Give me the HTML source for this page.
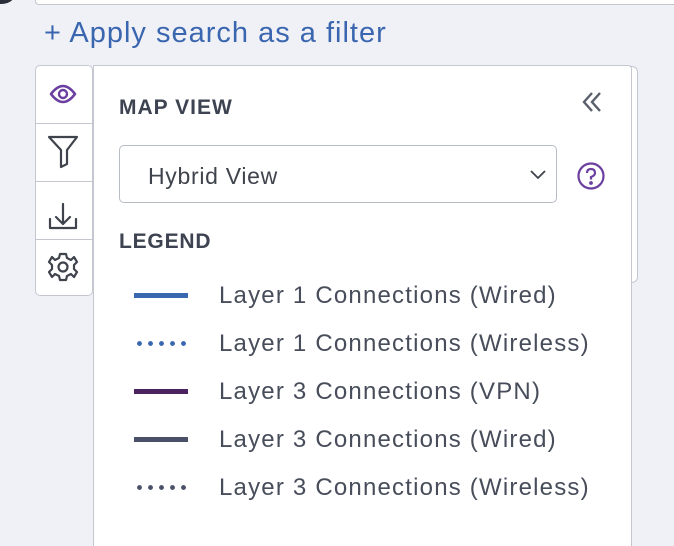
<!DOCTYPE html>
<html><head><style>
body{margin:0;width:674px;height:534px;background:#f0f1f6;position:relative;overflow:hidden;font-family:"Liberation Sans",sans-serif;}
.a{position:absolute;}
</style></head><body>
<div class="a" style="left:-12px;top:-12px;width:26px;height:16px;border-radius:50%;background:#2b2f3a"></div>
<div class="a" style="left:35px;top:-10px;width:700px;height:13px;background:#fff;border:1px solid #c4c7d0;border-radius:4px"></div>
<div class="a" style="left:44px;top:17px;font-size:29px;color:#3a66b0;white-space:nowrap;letter-spacing:1px">+ Apply search as a filter</div>
<div class="a" style="left:560px;top:66px;width:76px;height:215px;background:#fff;border:1px solid #c4c7d0;border-radius:6px"></div>
<div class="a" style="left:35px;top:65px;width:58px;height:231px;background:#fff;border:1px solid #c4c7d0;border-radius:5px;box-sizing:border-box"></div>
<div class="a" style="left:35px;top:123px;width:58px;height:1px;background:#c4c7d0"></div>
<div class="a" style="left:35px;top:181px;width:58px;height:1px;background:#c4c7d0"></div>
<div class="a" style="left:35px;top:239px;width:58px;height:1px;background:#c4c7d0"></div>
<svg class="a" style="left:35px;top:66px" width="58" height="232" fill="none" stroke-linecap="round" stroke-linejoin="round">
<path d="M16 28 Q28 12 40 28 Q28 44 16 28Z" stroke="#6b3fa0" stroke-width="2.6"/><circle cx="28" cy="28" r="4" stroke="#6b3fa0" stroke-width="2.4"/>
<path d="M14 71 H42 L32 84 V98 L26 101 V84 Z" stroke="#3f434c" stroke-width="2.2"/>
<path d="M28 138 V158 M21 151 L28 158 L35 151 M15 153 V162 H41 V153" stroke="#3f434c" stroke-width="2.2"/>
<g transform="translate(28,201)" stroke="#3f434c" stroke-width="2.2"><path d="M-3 -13 H3 L4 -9 L8 -7 L11 -10 L14 -5 L11 -2 V2 L14 5 L11 10 L8 7 L4 9 L3 13 H-3 L-4 9 L-8 7 L-11 10 L-14 5 L-11 2 V-2 L-14 -5 L-11 -10 L-8 -7 L-4 -9 Z"/><circle r="4.5"/></g>
</svg>
<div class="a" style="left:93px;top:65px;width:537px;height:480px;background:#fff;border-left:1px solid #c4c7d0;border-right:1px solid #c4c7d0;border-top:1px solid #c4c7d0;border-radius:0 4px 0 0"></div>
<div class="a" style="left:119px;top:96px;font-size:21px;font-weight:bold;color:#3d4350;letter-spacing:1px">MAP VIEW</div>
<svg class="a" style="left:580px;top:90px" width="26" height="26" fill="none" stroke="#5a5f6b" stroke-width="2.4"><path d="M12 3 L4 12 L12 21 M20 3 L12 12 L20 21"/></svg>
<div class="a" style="left:119px;top:145px;width:438px;height:58px;border:1.5px solid #b8bcc6;border-radius:5px;box-sizing:border-box"></div>
<div class="a" style="left:148px;top:163px;font-size:23px;color:#3f434c;letter-spacing:0.7px">Hybrid View</div>
<svg class="a" style="left:529px;top:168px" width="20" height="14" fill="none" stroke="#3f434c" stroke-width="1.8"><path d="M2 3 L9 10 L16 3"/></svg>
<svg class="a" style="left:576px;top:161px" width="30" height="30" fill="none" stroke="#6b3fa0" stroke-width="2.2"><circle cx="15" cy="15" r="12.5"/><path d="M11 12 Q11 8 15 8 Q19 8 19 12 Q19 14.5 15 16 V18.5"/><circle cx="15" cy="22" r="0.8" fill="#6b3fa0"/></svg>
<div class="a" style="left:119px;top:230px;font-size:21px;font-weight:bold;color:#3d4350;letter-spacing:0.8px">LEGEND</div>
<div class="a" style="left:134px;top:293px;width:54px;height:5px;background:#3a68b0"></div>
<div class="a" style="left:134px;top:341px;width:54px;height:5px;background:radial-gradient(circle,#3a68b0 2.2px,transparent 2.6px) 0 0/11px 5px"></div>
<div class="a" style="left:134px;top:389px;width:54px;height:5px;background:#4a2360"></div>
<div class="a" style="left:134px;top:437px;width:54px;height:5px;background:#4a5068"></div>
<div class="a" style="left:134px;top:485px;width:54px;height:5px;background:radial-gradient(circle,#4a5068 2.2px,transparent 2.6px) 0 0/11px 5px"></div>
<div class="a" style="left:219px;top:272px;font-size:24px;color:#474d5a;line-height:48px;white-space:nowrap;letter-spacing:1.2px">Layer 1 Connections (Wired)<br>Layer 1 Connections (Wireless)<br>Layer 3 Connections (VPN)<br>Layer 3 Connections (Wired)<br>Layer 3 Connections (Wireless)</div>
</body></html>
